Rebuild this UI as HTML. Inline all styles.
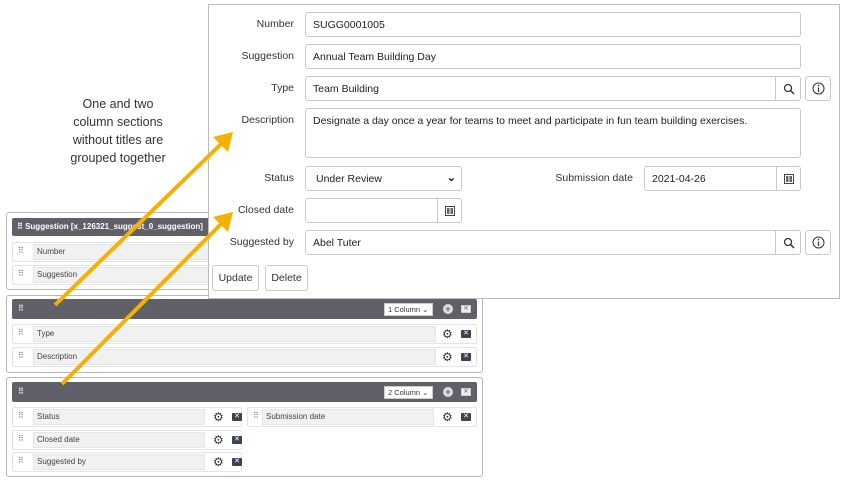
<!DOCTYPE html>
<html><head><style>
*{box-sizing:border-box;margin:0;padding:0}
body{width:843px;height:481px;background:#fff;position:relative;overflow:hidden;font-family:"Liberation Sans",sans-serif}
.a{position:absolute}
.panel{position:absolute;border:1.5px solid #b8b8b8;border-radius:3px;background:#fff}
.hdr{position:absolute;background:#606068;border-radius:2px;color:#fff;font-size:8px;font-weight:bold}
.row{position:absolute;border:1px solid #e4e4e4;border-radius:2px;background:#fff}
.fld{position:absolute;background:#f1f1f1;border:1px solid #e6e6e6;font-size:8px;color:#444;padding:2px 0 0 3px;height:16px}
.grip{position:absolute;font-size:8px;color:#777;letter-spacing:-1px}
.gear{position:absolute;font-size:12px;color:#333;line-height:12px}
.x{position:absolute;width:10px;height:8px;background:#3b4450;border-radius:1px;color:#fff;font-size:7px;line-height:8px;text-align:center}
.lbl{position:absolute;font-size:10.5px;color:#333;text-align:right;width:120px}
.inp{position:absolute;border:1px solid #c8c8c8;border-radius:3px;background:#fff;font-size:10.5px;color:#222;padding:6px 0 0 7px}
.btn{position:absolute;border:1px solid #c8c8c8;border-radius:3px;background:#fff;font-size:10.5px;color:#333;text-align:center;line-height:24px}
.sel{position:absolute;background:#fff;font-size:7.5px;font-weight:normal;color:#333;border:1px solid #ccc;padding:2px 3px;height:13px;line-height:8px}
.plus{position:absolute;width:10px;height:10px;border-radius:50%;background:#ddd;color:#666;font-size:9px;line-height:10px;text-align:center}
.hx{position:absolute;width:10px;height:8px;border:1px solid #ccc;background:#eee;color:#888;font-size:6px;line-height:6px;text-align:center}
.ic{position:absolute;width:26px;height:25px;border-left:1px solid #c8c8c8;display:flex;align-items:center;justify-content:center}
</style></head><body>

<div class="a" style="left:63px;top:95px;width:110px;text-align:center;font-size:12.5px;line-height:18px;color:#333">One and two column sections without titles are grouped together</div>

<!-- panel 1 -->
<div class="panel" style="left:6px;top:212px;width:240px;height:78px">
 <div class="hdr" style="left:5px;top:5px;width:230px;height:18px;padding:4px 0 0 5px">⠿ Suggestion [x_126321_suggest_0_suggestion]</div>
 <div class="row" style="left:5px;top:29px;width:230px;height:20px"><span class="grip" style="left:5px;top:3px">⠿</span><div class="fld" style="left:20px;top:1px;width:205px">Number</div></div>
 <div class="row" style="left:5px;top:52px;width:230px;height:20px"><span class="grip" style="left:5px;top:3px">⠿</span><div class="fld" style="left:20px;top:1px;width:205px">Suggestion</div></div>
</div>

<!-- panel 2 -->
<div class="panel" style="left:6px;top:295px;width:477px;height:78px">
 <div class="hdr" style="left:5px;top:3px;width:465px;height:20px"><span class="grip" style="left:6px;top:5px;color:#ddd">⠿</span>
  <div class="sel" style="left:372px;top:4px;width:49px">1 Column ⌄</div><div class="plus" style="left:431px;top:5px">+</div><div class="hx" style="left:449px;top:6px">✕</div></div>
 <div class="row" style="left:5px;top:28px;width:465px;height:20px"><span class="grip" style="left:5px;top:3px">⠿</span><div class="fld" style="left:20px;top:1px;width:403px">Type</div><span class="gear" style="left:429px;top:3px">⚙</span><div class="x" style="left:448px;top:5px">✕</div></div>
 <div class="row" style="left:5px;top:51px;width:465px;height:20px"><span class="grip" style="left:5px;top:3px">⠿</span><div class="fld" style="left:20px;top:1px;width:403px">Description</div><span class="gear" style="left:429px;top:3px">⚙</span><div class="x" style="left:448px;top:5px">✕</div></div>
</div>

<!-- panel 3 -->
<div class="panel" style="left:6px;top:377px;width:477px;height:100px">
 <div class="hdr" style="left:5px;top:4px;width:465px;height:20px"><span class="grip" style="left:6px;top:5px;color:#ddd">⠿</span>
  <div class="sel" style="left:372px;top:4px;width:49px">2 Column ⌄</div><div class="plus" style="left:431px;top:5px">+</div><div class="hx" style="left:449px;top:6px">✕</div></div>
 <div class="row" style="left:5px;top:29px;width:230px;height:20px"><span class="grip" style="left:5px;top:3px">⠿</span><div class="fld" style="left:20px;top:1px;width:172px">Status</div><span class="gear" style="left:200px;top:3px">⚙</span><div class="x" style="left:219px;top:5px">✕</div></div>
 <div class="row" style="left:240px;top:29px;width:230px;height:20px"><span class="grip" style="left:5px;top:3px">⠿</span><div class="fld" style="left:14px;top:1px;width:172px">Submission date</div><span class="gear" style="left:194px;top:3px">⚙</span><div class="x" style="left:213px;top:5px">✕</div></div>
 <div class="row" style="left:5px;top:52px;width:230px;height:20px"><span class="grip" style="left:5px;top:3px">⠿</span><div class="fld" style="left:20px;top:1px;width:172px">Closed date</div><span class="gear" style="left:200px;top:3px">⚙</span><div class="x" style="left:219px;top:5px">✕</div></div>
 <div class="row" style="left:5px;top:74px;width:230px;height:20px"><span class="grip" style="left:5px;top:3px">⠿</span><div class="fld" style="left:20px;top:1px;width:172px">Suggested by</div><span class="gear" style="left:200px;top:3px">⚙</span><div class="x" style="left:219px;top:5px">✕</div></div>
</div>

<!-- form -->
<div class="a" style="left:208px;top:4px;width:632px;height:295px;border:1px solid #bcbcbc;background:#fff">
 <div class="lbl" style="left:-35px;top:13px">Number</div>
 <div class="inp" style="left:96px;top:7px;width:496px;height:25px">SUGG0001005</div>
 <div class="lbl" style="left:-35px;top:45px">Suggestion</div>
 <div class="inp" style="left:96px;top:39px;width:496px;height:25px">Annual Team Building Day</div>
 <div class="lbl" style="left:-35px;top:77px">Type</div>
 <div class="inp" style="left:96px;top:71px;width:496px;height:25px">Team Building</div>
 <div class="ic" style="left:566px;top:71px"><svg width="12" height="12"><circle cx="5" cy="5" r="3.5" fill="none" stroke="#333" stroke-width="1.3"/><line x1="7.5" y1="7.5" x2="11" y2="11" stroke="#333" stroke-width="1.5"/></svg></div>
 <div class="btn" style="left:596px;top:71px;width:26px;height:25px;display:flex;align-items:center;justify-content:center"><svg width="13" height="13"><circle cx="6.5" cy="6.5" r="5.5" fill="none" stroke="#333"/><line x1="6.5" y1="5.5" x2="6.5" y2="10" stroke="#333" stroke-width="1.2"/><circle cx="6.5" cy="3.6" r="0.8" fill="#333"/></svg></div>
 <div class="lbl" style="left:-35px;top:109px">Description</div>
 <div class="inp" style="left:96px;top:103px;width:496px;height:50px">Designate a day once a year for teams to meet and participate in fun team building exercises.</div>
 <div class="lbl" style="left:-35px;top:167px">Status</div>
 <div class="inp" style="left:96px;top:161px;width:157px;height:25px;padding-left:10px">Under Review<span style="position:absolute;right:5px;top:4px;font-size:11px;font-weight:bold">⌄</span></div>
 <div class="lbl" style="left:304px;top:167px">Submission date</div>
 <div class="inp" style="left:435px;top:161px;width:157px;height:25px">2021-04-26</div>
 <div class="ic" style="left:567px;top:161px;width:25px"><svg width="10" height="10"><rect x="0.5" y="0.5" width="9" height="9" fill="none" stroke="#444"/><rect x="2" y="2" width="6" height="6" fill="#666"/><line x1="5" y1="1" x2="5" y2="9" stroke="#fff"/></svg></div>
 <div class="lbl" style="left:-35px;top:199px">Closed date</div>
 <div class="inp" style="left:96px;top:193px;width:157px;height:25px"></div>
 <div class="ic" style="left:228px;top:193px;width:25px"><svg width="10" height="10"><rect x="0.5" y="0.5" width="9" height="9" fill="none" stroke="#444"/><rect x="2" y="2" width="6" height="6" fill="#666"/><line x1="5" y1="1" x2="5" y2="9" stroke="#fff"/></svg></div>
 <div class="lbl" style="left:-35px;top:231px">Suggested by</div>
 <div class="inp" style="left:96px;top:225px;width:496px;height:25px">Abel Tuter</div>
 <div class="ic" style="left:566px;top:225px"><svg width="12" height="12"><circle cx="5" cy="5" r="3.5" fill="none" stroke="#333" stroke-width="1.3"/><line x1="7.5" y1="7.5" x2="11" y2="11" stroke="#333" stroke-width="1.5"/></svg></div>
 <div class="btn" style="left:596px;top:225px;width:26px;height:25px;display:flex;align-items:center;justify-content:center"><svg width="13" height="13"><circle cx="6.5" cy="6.5" r="5.5" fill="none" stroke="#333"/><line x1="6.5" y1="5.5" x2="6.5" y2="10" stroke="#333" stroke-width="1.2"/><circle cx="6.5" cy="3.6" r="0.8" fill="#333"/></svg></div>
 <div class="btn" style="left:3px;top:260px;width:47px;height:26px">Update</div>
 <div class="btn" style="left:56px;top:260px;width:43px;height:26px">Delete</div>
</div>

<svg class="a" style="left:0;top:0" width="843" height="481">
 <g stroke="#F5B000" stroke-width="4" fill="#F5B000">
  <line x1="55" y1="305" x2="222" y2="143"/>
  <line x1="62" y1="384" x2="222" y2="223"/>
 </g>
 <polygon fill="#F5B000" points="233,132 228,152 213,137"/>
 <polygon fill="#F5B000" points="233,212 228,232 213,217"/>
</svg>
</body></html>
